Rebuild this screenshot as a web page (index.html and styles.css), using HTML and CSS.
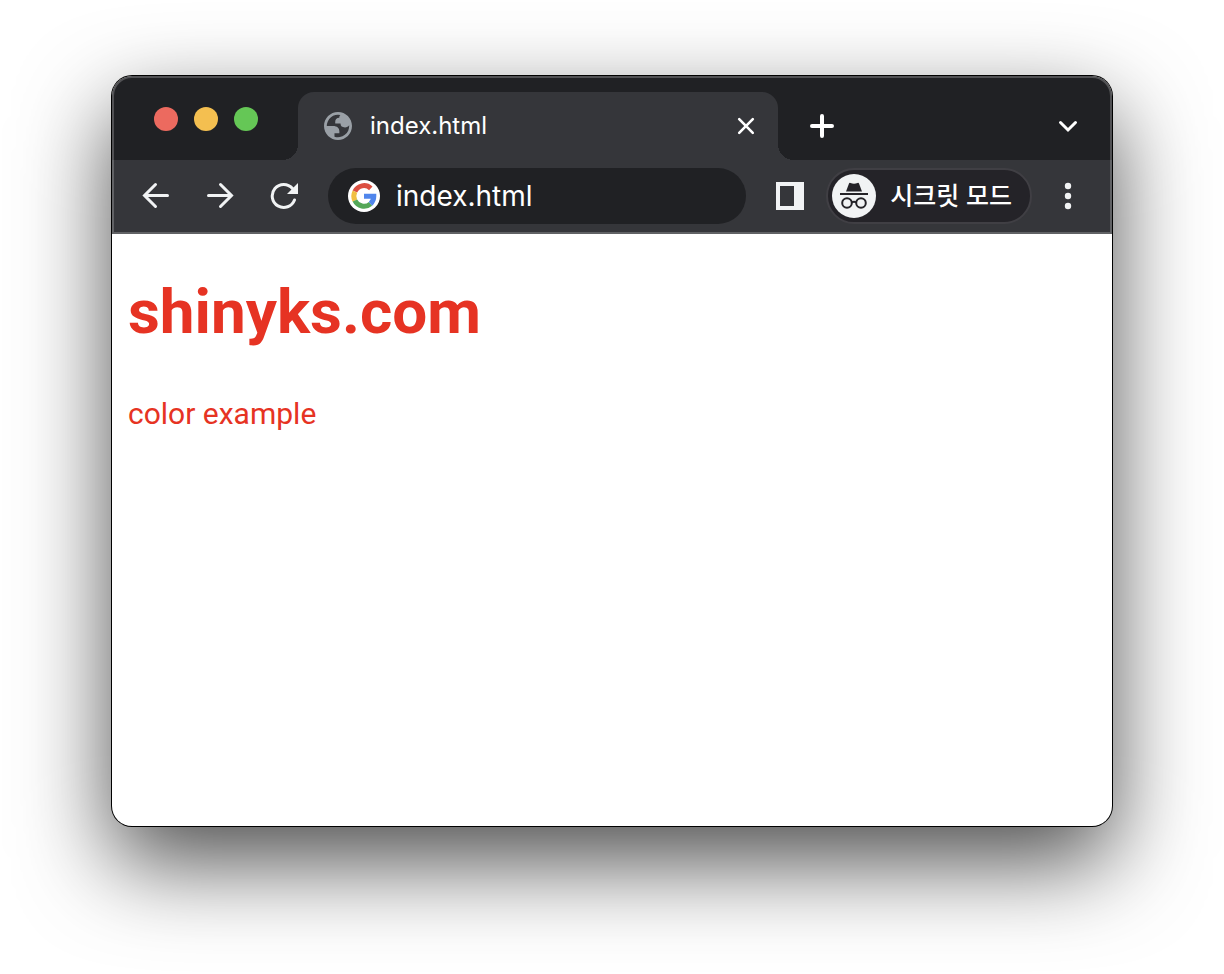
FILE: index.html
```html
<!DOCTYPE html>
<html lang="ko">
<head>
    <meta charset="UTF-8">
    <title>index.html</title>
    <meta name="viewport" content="width=device-width, initial-scale=1.0">
    <link rel="stylesheet" href="styles.css">
</head>
<body>
    <div class="window">
        <header class="chrome">
            <div class="tab-strip">
                <div class="lights">
                    <button class="light red" aria-label="Close window"></button>
                    <button class="light yellow" aria-label="Minimize window"></button>
                    <button class="light green" aria-label="Zoom window"></button>
                </div>
                <div class="tab">
                    <svg class="favicon" viewBox="2 2 20 20" width="28" height="28">
                        <path d="M12 2C6.480 2 2 6.480 2 12s4.480 10 10 10 10-4.480 10-10S17.520 2 12 2zM4 12h4.400c3.407.022 4.922 1.730 4.543 5.127H9.488v2.470a8.004 8.004 0 0 0 10.498-8.083C19.327 12.504 18.333 13 17 13c-2.137 0-3.210-.916-3.210-2.750h-3.748c-.274-2.728.683-4.092 2.870-4.092 0-.975.327-1.597.811-1.970A8.004 8.004 0 0 0 4 12z" fill="#9aa0a6" fill-rule="evenodd"/>
                    </svg>
                    <span class="tab-title">index.html</span>
                    <button class="icon-btn" aria-label="Close tab">
                        <svg viewBox="0 0 20 20" width="20" height="20"><path d="M3.200 3.200L16.800 16.800M16.800 3.200L3.200 16.800" stroke="#fff" stroke-width="2.600" stroke-linecap="round"/></svg>
                    </button>
                </div>
                <button class="icon-btn new-tab" aria-label="New tab">
                    <svg viewBox="0 0 24 24" width="24" height="24"><path d="M12 2V22M2 12H22" stroke="#fff" stroke-width="4" stroke-linecap="round"/></svg>
                </button>
                <button class="icon-btn tab-search" aria-label="Search tabs">
                    <svg viewBox="0 0 20 14" width="20" height="14"><path d="M2.500 3.500L10 11L17.500 3.500" fill="none" stroke="#fff" stroke-width="3" stroke-linecap="round"/></svg>
                </button>
            </div>

            <div class="toolbar">
                <nav class="nav">
                    <button class="icon-btn" aria-label="Back">
                        <svg viewBox="0 0 28 28" width="28" height="28"><path d="M25.500 13.500H3M13.500 2.500L2.500 13.500L13.500 24.500" fill="none" stroke="#f1f3f4" stroke-width="3" stroke-linecap="round"/></svg>
                    </button>
                    <button class="icon-btn" aria-label="Forward">
                        <svg viewBox="0 0 28 28" width="28" height="28"><path d="M2.500 13.500H25M14.500 2.500L25.500 13.500L14.500 24.500" fill="none" stroke="#f1f3f4" stroke-width="3" stroke-linecap="round"/></svg>
                    </button>
                    <button class="icon-btn" aria-label="Reload">
                        <svg viewBox="0 0 28 28" width="28" height="28">
                            <path d="M24.500 18A11.500 11.500 0 1 1 22.500 6.500" fill="none" stroke="#f1f3f4" stroke-width="3" stroke-linecap="round"/>
                            <path d="M28 1V12H17Z" fill="#f1f3f4"/>
                        </svg>
                    </button>
                </nav>

                <div class="omnibox">
                    <svg class="google" viewBox="0 0 32 32" width="32" height="32">
                        <circle cx="16" cy="16" r="16" fill="#fff"/>
                        <g fill="none" stroke-width="5">
                            <path d="M6.900 11.500A10 10 0 0 1 22.800 8.300" stroke="#db4f41"/>
                            <path d="M6.900 20.500A10 10 0 0 1 6.900 11.500" stroke="#f1bf42"/>
                            <path d="M22.500 23.800A10 10 0 0 1 6.900 20.500" stroke="#54a758"/>
                            <path d="M16 16.200H25.800Q25.800 20.800 22.500 23.800" stroke="#5086ec"/>
                        </g>
                    </svg>
                    <input class="address" type="text" value="index.html" aria-label="Address">
                </div>

                <button class="icon-btn side-panel" aria-label="Side panel">
                    <svg viewBox="0 0 28 28" width="28" height="28"><path d="M0 0H28V28H0ZM4 4V24H18V4Z" fill="#f1f3f4" fill-rule="evenodd"/></svg>
                </button>

                <button class="incognito">
                    <svg viewBox="0 0 44 44" width="44" height="44">
                        <circle cx="22" cy="22" r="22" fill="#f1f3f4"/>
                        <path d="M14 17.500L17 9.500Q17.500 8.500 18.500 9Q22 10.500 25.500 9Q26.500 8.500 27 9.500L30 17.500Z" fill="#242328"/>
                        <path d="M8 20H36" stroke="#242328" stroke-width="2"/>
                        <g fill="none" stroke="#242328" stroke-width="2">
                            <circle cx="15" cy="29" r="4.800"/>
                            <circle cx="29" cy="29" r="4.800"/>
                            <path d="M19.500 28.500Q22 27 24.500 28.500"/>
                        </g>
                    </svg>
                    <span>시크릿 모드</span>
                </button>

                <button class="icon-btn" aria-label="Menu">
                    <svg viewBox="0 0 8 28" width="8" height="28" fill="#f1f3f4">
                        <circle cx="4" cy="4" r="3.200"/>
                        <circle cx="4" cy="14" r="3.200"/>
                        <circle cx="4" cy="24" r="3.200"/>
                    </svg>
                </button>
            </div>
        </header>

        <main class="page">
            <h1>shinyks.com</h1>
            <p>color example</p>
        </main>
    </div>
</body>
</html>
```
FILE: styles.css
```css
* {
    box-sizing: border-box;
}
body {
    margin: 0;
    min-height: 100vh;
    padding: 76px 112px 148px;
    display: flex;
    background: #fff;
    font-family: Inter, "Noto Sans CJK KR", sans-serif;
}
button {
    border: none;
    padding: 0;
    background: none;
    color: inherit;
    font: inherit;
    cursor: pointer;
}
svg {
    display: block;
    flex-shrink: 0;
}
.window {
    flex: 1;
    min-width: 0;
    overflow: hidden;
    border-radius: 20px;
    background: #fff;
    box-shadow: 0 0 0 1px #000, 0 36px 92px rgba(0, 0, 0, 0.7);
}

/* browser frame */
.chrome {
    position: relative;
    color: #fff;
    background: #202124;
}
.chrome::after {
    content: "";
    position: absolute;
    inset: 0;
    border: 2px solid rgba(255, 255, 255, 0.22);
    border-radius: 20px 20px 0 0;
    pointer-events: none;
}
.tab-strip {
    display: flex;
    align-items: flex-end;
    height: 84px;
    padding: 0 34px 0 42px;
}
.lights {
    display: flex;
    gap: 16px;
    margin-right: 40px;
    padding-bottom: 29px;
}
.light {
    width: 24px;
    height: 24px;
    border-radius: 50%;
}
.red {
    background: #ec6a5f;
}
.yellow {
    background: #f4bf50;
}
.green {
    background: #65c756;
}
.tab {
    position: relative;
    display: flex;
    align-items: center;
    gap: 18px;
    flex: 0 1 480px;
    height: 68px;
    padding: 0 22px 0 26px;
    border-radius: 16px 16px 0 0;
    background: #35363a;
}
.tab::before,
.tab::after {
    content: "";
    position: absolute;
    bottom: 0;
    width: 16px;
    height: 16px;
}
.tab::before {
    right: 100%;
    background: radial-gradient(circle at 0 0, transparent 16px, #35363a 16px);
}
.tab::after {
    left: 100%;
    background: radial-gradient(circle at 100% 0, transparent 16px, #35363a 16px);
}
.tab-title {
    flex: 1;
    font-size: 24px;
    line-height: 32px;
}
.icon-btn {
    display: flex;
    align-items: center;
    justify-content: center;
    flex-shrink: 0;
}
.new-tab {
    height: 68px;
    margin-left: 32px;
}
.tab-search {
    height: 68px;
    margin-left: auto;
}
.toolbar {
    display: flex;
    align-items: center;
    height: 74px;
    padding: 0 40px 2px 30px;
    background: #35363a;
}
.nav {
    display: flex;
    gap: 36px;
    margin-right: 30px;
}
.omnibox {
    display: flex;
    align-items: center;
    gap: 16px;
    flex: 1;
    min-width: 0;
    height: 56px;
    padding: 0 20px;
    border-radius: 28px;
    background: #202124;
}
.address {
    flex: 1;
    min-width: 0;
    border: none;
    outline: none;
    padding: 0;
    background: none;
    color: #fff;
    font: 28px/36px Inter, sans-serif;
}
.side-panel {
    margin: 0 22px 0 30px;
}
.incognito {
    display: flex;
    align-items: center;
    gap: 14px;
    height: 56px;
    margin-right: 32px;
    padding: 0 18px 0 4px;
    border: 2px solid #403f44;
    border-radius: 28px;
    background: #242328;
    font-size: 25px;
    font-weight: 500;
    line-height: 36px;
    white-space: nowrap;
}

/* page content */
.page {
    padding: 0 16px;
    color: #e63323;
    font-family: Roboto, sans-serif;
}
h1 {
    margin: 40px 0;
    font-size: 62px;
    line-height: 76px;
}
p {
    margin: 0;
    font-size: 30px;
    line-height: 48px;
}
```
